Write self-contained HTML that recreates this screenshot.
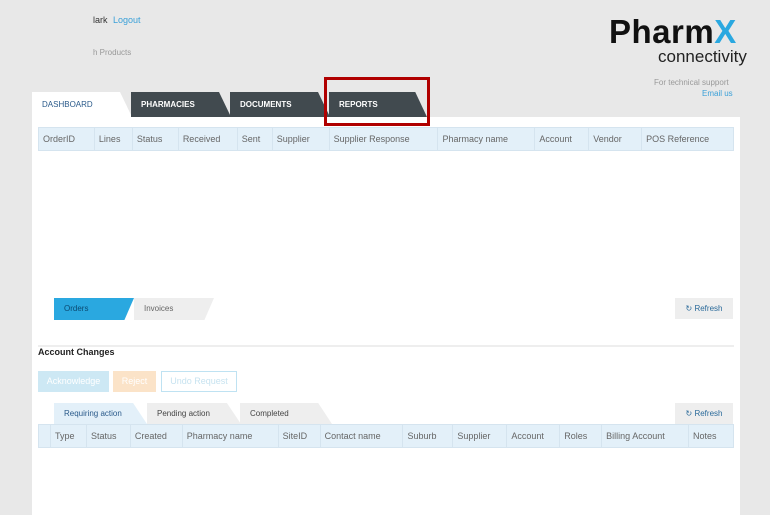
<!DOCTYPE html>
<html><head><style>
*{margin:0;padding:0;box-sizing:border-box}
body{width:770px;height:515px;background:#e8e8e8;font-family:"Liberation Sans",sans-serif;position:relative;overflow:hidden;font-size:9px;color:#555}
.a{position:absolute}
.panel{left:32px;top:117px;width:708px;height:398px;background:#fff}
.tab{position:absolute;top:92px;height:25px;font-size:8px;font-weight:bold;line-height:25px;padding-left:10px;color:#fff;background:#414a4f;clip-path:polygon(0 0,88% 0,100% 100%,0 100%)}
.hdr{position:absolute;background:#e3f0f9;border:1px solid #d5e4ef;display:flex}
.hdr div{border-right:1px solid #d5e4ef;padding-left:4px;font-size:9px;color:#666;display:flex;align-items:center}
.hdr div:last-child{border-right:none}
.st{position:absolute;height:22px;line-height:22px;font-size:8px;padding-left:10px;clip-path:polygon(0 0,100% 0,88% 100%,0 100%)}
.st2{position:absolute;height:21px;line-height:21px;font-size:8px;padding-left:10px;clip-path:polygon(0 0,85% 0,100% 100%,0 100%)}
.ref{position:absolute;width:58px;height:21px;background:#eee;font-size:8px;color:#2a6a9a;line-height:21px;text-align:center}
</style></head><body>
<div class="a" style="left:93px;top:15px;font-size:9px;color:#333">lark <span style="color:#3aa0d8;margin-left:3px">Logout</span></div>
<div class="a" style="left:93px;top:48px;font-size:8px;color:#999">h Products</div>
<div class="a" style="left:609px;top:12px;font-size:33px;font-weight:bold;color:#111;letter-spacing:0.5px;line-height:40px">Pharm<span style="color:#2aa8e0">X</span></div>
<div class="a" style="left:658px;top:47px;font-size:17px;color:#222">connectivity</div>
<div class="a" style="left:654px;top:78px;font-size:8px;color:#999">For technical support</div>
<div class="a" style="left:702px;top:89px;font-size:8px;color:#3aa0d8">Email us</div>
<div class="a panel"></div>
<div class="tab" style="left:32px;width:100px;background:#fff;color:#2a5a8a;font-weight:normal">DASHBOARD</div>
<div class="tab" style="left:131px;width:100px">PHARMACIES</div>
<div class="tab" style="left:230px;width:100px">DOCUMENTS</div>
<div class="tab" style="left:329px;width:98px">REPORTS</div>
<div class="a" style="left:324px;top:77px;width:106px;height:49px;border:3px solid #b00000"></div>
<div class="hdr" style="left:38px;top:127px;width:696px;height:24px">
<div style="width:56px">OrderID</div><div style="width:38px">Lines</div><div style="width:46px">Status</div><div style="width:59px">Received</div><div style="width:35px">Sent</div><div style="width:57px">Supplier</div><div style="width:109px">Supplier Response</div><div style="width:97px">Pharmacy name</div><div style="width:54px">Account</div><div style="width:53px">Vendor</div><div style="width:91px">POS Reference</div></div>
<div class="st" style="left:54px;top:298px;width:80px;background:#2aa8e0;color:#0b4a72">Orders</div>
<div class="st" style="left:134px;top:298px;width:80px;background:#eee;color:#666">Invoices</div>
<div class="ref" style="left:675px;top:298px">&#8635; Refresh</div>
<div class="a" style="left:38px;top:345px;width:696px;height:2px;background:#eee"></div>
<div class="a" style="left:38px;top:347px;font-size:9px;font-weight:bold;color:#222">Account Changes</div>
<div class="a" style="left:38px;top:371px;width:71px;height:21px;background:#cde8f4;color:#fff;font-size:9px;line-height:21px;text-align:center">Acknowledge</div>
<div class="a" style="left:113px;top:371px;width:43px;height:21px;background:#fbe3c8;color:#fff;font-size:9px;line-height:21px;text-align:center">Reject</div>
<div class="a" style="left:161px;top:371px;width:76px;height:21px;border:1px solid #bfe2f2;color:#c7e3f0;font-size:9px;line-height:19px;text-align:center">Undo Request</div>
<div class="st2" style="left:54px;top:403px;width:93px;background:#e3f0f9;color:#2a5a8a">Requiring action</div>
<div class="st2" style="left:147px;top:403px;width:94px;background:#eee;color:#444">Pending action</div>
<div class="st2" style="left:240px;top:403px;width:92px;background:#eee;color:#444">Completed</div>
<div class="ref" style="left:675px;top:403px">&#8635; Refresh</div>
<div class="hdr" style="left:38px;top:424px;width:696px;height:24px">
<div style="width:12px"></div><div style="width:36px">Type</div><div style="width:44px">Status</div><div style="width:52px">Created</div><div style="width:96px">Pharmacy name</div><div style="width:42px">SiteID</div><div style="width:83px">Contact name</div><div style="width:50px">Suburb</div><div style="width:54px">Supplier</div><div style="width:53px">Account</div><div style="width:42px">Roles</div><div style="width:87px">Billing Account</div><div style="width:44px">Notes</div></div>
</body></html>
